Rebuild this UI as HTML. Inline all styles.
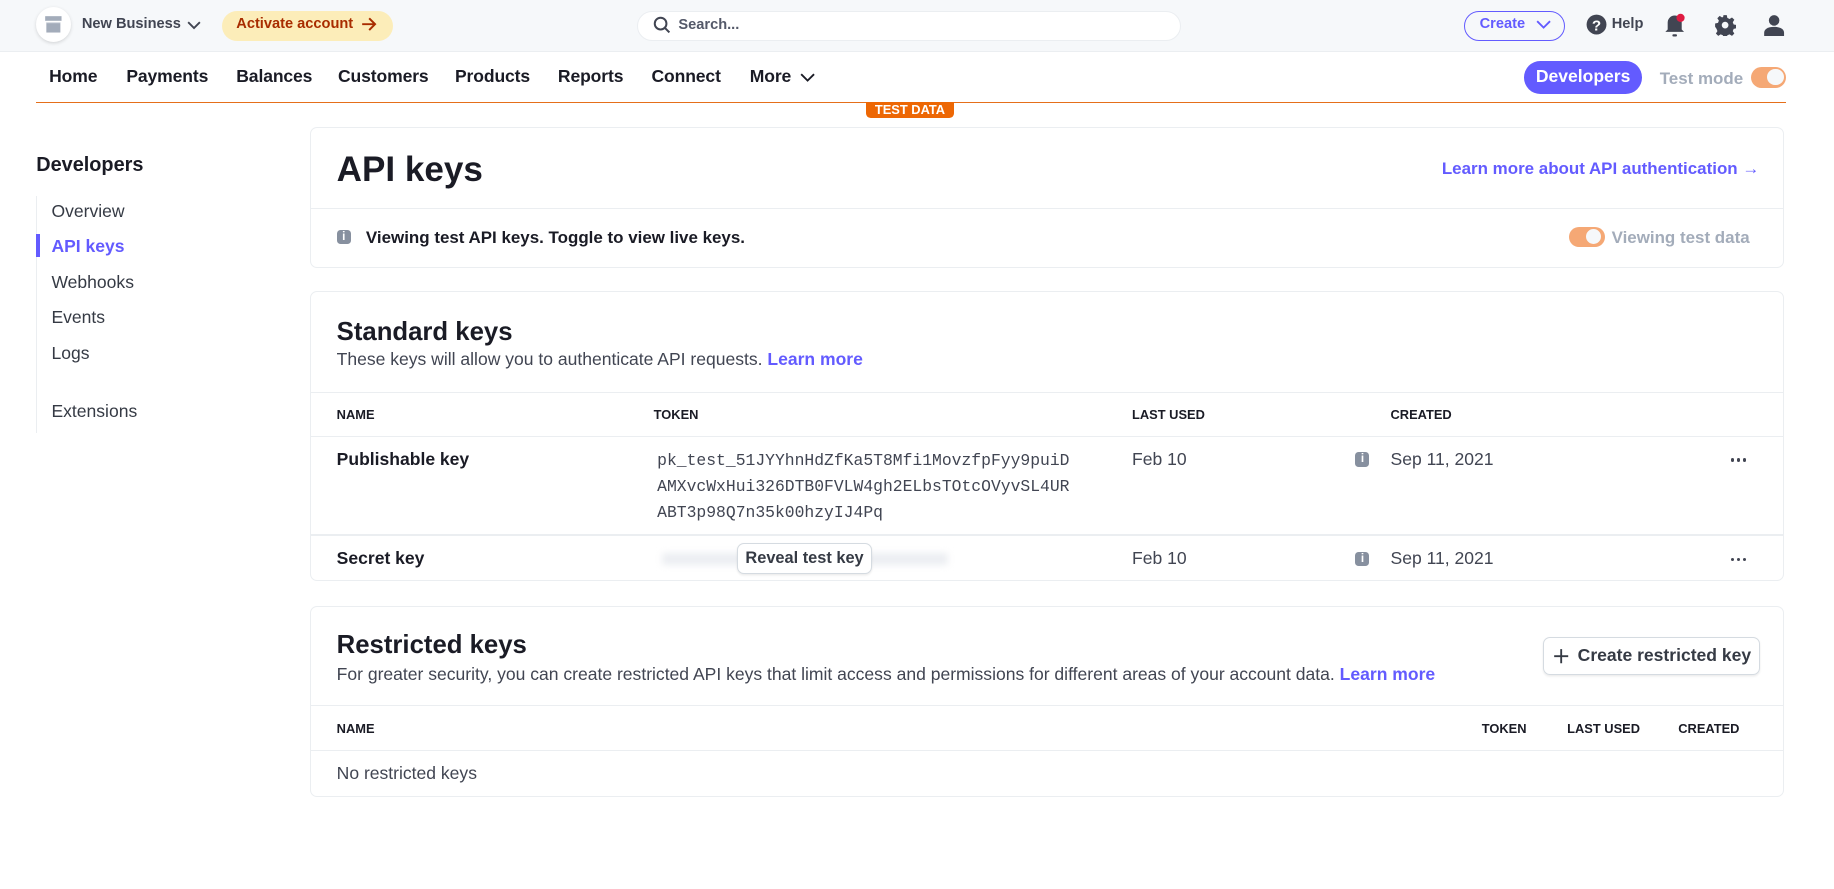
<!DOCTYPE html>
<html><head><meta charset="utf-8"><style>
html,body{margin:0;padding:0;background:#fff;overflow:hidden}
#w{position:relative;width:1568px;height:760px;zoom:1.16964;font-family:"Liberation Sans","DejaVu Sans",sans-serif;color:#1a1b25}
.a{position:absolute;white-space:nowrap}
.t{line-height:20px}
.nav{font-size:15px;font-weight:bold;color:#1a1b25;top:56px;letter-spacing:-0.1px}
.side{font-size:15px;color:#353a44;left:44px}
.card{position:absolute;left:265px;width:1260px;border:1px solid #ebeef1;border-radius:6px;box-sizing:border-box;background:#fff}
.hr{position:absolute;left:0;right:0;height:1px;background:#ebeef1}
.th{font-size:11px;font-weight:bold;color:#1a1b25}
.mono{font-family:"Liberation Mono","DejaVu Sans Mono",monospace;font-size:14px;color:#414552}
.info{position:absolute;width:12px;height:12px;border-radius:3px;background:#87909f;color:#fff;font-size:10px;font-weight:bold;text-align:center;line-height:12px}
.dots{position:absolute;width:16px;height:4px}
.dots i{position:absolute;top:0;width:3px;height:3px;border-radius:50%;background:#414552}
</style></head><body><div id="w">
<div class="a" style="left:0;top:0;width:1568px;height:44px;background:#f6f8fa;border-bottom:1px solid #ebeef1"></div>
<div class="a" style="left:31px;top:6px;width:30px;height:30px;border-radius:50%;background:#fff;box-shadow:0 1px 3px rgba(0,0,0,.15)"></div>
<svg class="a" style="left:38px;top:13px" width="16" height="16" viewBox="0 0 16 16"><rect x="1" y="1" width="14" height="4" fill="#a3acba"/><rect x="2" y="6" width="12" height="9" fill="#a3acba"/><rect x="2" y="5" width="12" height="2" fill="#fff" opacity=".6"/></svg>
<div class="a t" style="left:70px;top:11px;font-size:12.5px;font-weight:bold;color:#414552">New Business</div>
<svg class="a" style="left:160px;top:18px" width="12" height="8"><path d="M1 1l5 5 5-5" stroke="#414552" stroke-width="1.6" fill="none"/></svg>
<div class="a" style="left:190px;top:9px;width:146px;height:26px;border-radius:13px;background:#fcedb9"></div>
<div class="a t" style="left:202px;top:11px;font-size:12.5px;font-weight:bold;color:#a82c00">Activate account</div>
<svg class="a" style="left:309px;top:14px" width="14" height="14"><path d="M1 7h11M7 2l5 5-5 5" stroke="#a82c00" stroke-width="1.7" fill="none"/></svg>
<div class="a" style="left:545px;top:9px;width:465px;height:26px;border-radius:13px;background:#fff;border:1px solid #ebeef1;box-sizing:border-box"></div>
<svg class="a" style="left:558px;top:14px" width="15" height="15"><circle cx="6.5" cy="6.5" r="5" stroke="#414552" stroke-width="1.7" fill="none"/><path d="M10 10l4 4" stroke="#414552" stroke-width="1.7"/></svg>
<div class="a t" style="left:580px;top:12px;font-size:12.5px;font-weight:bold;color:#545969">Search...</div>
<div class="a" style="left:1252px;top:9px;width:86px;height:26px;border-radius:13px;border:1px solid #635bff;box-sizing:border-box"></div>
<div class="a t" style="left:1265px;top:11px;font-size:12.5px;font-weight:bold;color:#635bff">Create</div>
<svg class="a" style="left:1313px;top:17px" width="13" height="9"><path d="M1 1l5.5 5.5L12 1" stroke="#635bff" stroke-width="1.6" fill="none"/></svg>
<svg class="a" style="left:1356px;top:12px" width="18" height="18"><circle cx="9" cy="9" r="8.5" fill="#414552"/><text x="9" y="14" font-size="13" font-weight="bold" fill="#fff" text-anchor="middle" font-family="Liberation Sans">?</text></svg>
<div class="a t" style="left:1378px;top:11px;font-size:12.5px;font-weight:bold;color:#414552">Help</div>
<svg class="a" style="left:1422px;top:10px" width="20" height="22"><path d="M4 15V9a6 6 0 0 1 12 0v6l2 2H2z" fill="#414552"/><rect x="8" y="19" width="4" height="2" rx="1" fill="#414552"/><circle cx="15" cy="5" r="3.5" fill="#df1b41"/></svg>
<svg class="a" style="left:1465px;top:12px" width="19" height="19" viewBox="0 0 20 20"><path d="M8.5 1h3l.5 2.5 2 1 2.2-1.4 2.1 2.1-1.4 2.2.8 2 2.6.5v3l-2.6.5-.8 2 1.4 2.2-2.1 2.1-2.2-1.4-2 .8-.5 2.6h-3l-.5-2.6-2-.8-2.2 1.4-2.1-2.1 1.4-2.2-.8-2L1 11.5v-3l2.6-.5.8-2L3 3.8l2.1-2.1L7.3 3.1l1-.6z" fill="#414552"/><circle cx="10" cy="10" r="3" fill="#f6f8fa"/></svg>
<svg class="a" style="left:1507px;top:12px" width="19" height="19"><circle cx="9.5" cy="5.5" r="4.5" fill="#414552"/><path d="M1 19v-3c0-3 3-5 8.5-5s8.5 2 8.5 5v3z" fill="#414552"/></svg>
<div class="a nav t" style="left:42px">Home</div>
<div class="a nav t" style="left:108px">Payments</div>
<div class="a nav t" style="left:202px">Balances</div>
<div class="a nav t" style="left:289px">Customers</div>
<div class="a nav t" style="left:389px">Products</div>
<div class="a nav t" style="left:477px">Reports</div>
<div class="a nav t" style="left:557px">Connect</div>
<div class="a nav t" style="left:641px">More</div>
<svg class="a" style="left:684px;top:62px" width="13" height="9"><path d="M1 1l5.5 5.5L12 1" stroke="#1a1b25" stroke-width="1.6" fill="none"/></svg>
<div class="a" style="left:1303px;top:52px;width:101px;height:28px;border-radius:14px;background:#635bff"></div>
<div class="a t" style="left:1303px;width:101px;text-align:center;top:56px;font-size:15px;font-weight:bold;color:#fff">Developers</div>
<div class="a t" style="left:1419px;top:57px;font-size:14.5px;font-weight:bold;color:#a3acba">Test mode</div>
<div class="a" style="left:1497px;top:57px;width:30px;height:18px;border-radius:9px;background:#f5a875"></div>
<div class="a" style="left:1511px;top:59px;width:14px;height:14px;border-radius:50%;background:#f6f8fa"></div>
<div class="a" style="left:31px;top:87px;width:1496px;height:1px;background:#e56f1a"></div>
<div class="a" style="left:740px;top:87px;width:76px;height:14px;border-radius:0 0 4px 4px;background:#ed6704;color:#fff;font-size:11px;font-weight:bold;text-align:center;line-height:14px">TEST DATA</div>
<div class="a" style="left:31px;top:129px;font-size:17px;font-weight:bold;line-height:24px">Developers</div>
<div class="a" style="left:31px;top:168px;width:1px;height:202px;background:#ebeef1"></div>
<div class="a" style="left:31px;top:200px;width:3px;height:20px;background:#635bff"></div>
<div class="a side t" style="top:171px">Overview</div>
<div class="a side t" style="top:201px;color:#635bff;font-weight:bold">API keys</div>
<div class="a side t" style="top:232px">Webhooks</div>
<div class="a side t" style="top:262px">Events</div>
<div class="a side t" style="top:292px">Logs</div>
<div class="a side t" style="top:342px">Extensions</div>
<div class="card" style="top:109px;height:120px">
  <div class="a" style="left:22px;top:17px;font-size:30px;font-weight:bold;line-height:38px">API keys</div>
  <div class="a t" style="right:20px;top:24px;font-size:14.5px;font-weight:bold;color:#635bff">Learn more about API authentication →</div>
  <div class="hr" style="top:68px"></div>
  <div class="info" style="left:22px;top:87px">i</div>
  <div class="a t" style="left:47px;top:83px;font-size:14.5px;font-weight:bold;color:#1a1b25">Viewing test API keys. Toggle to view live keys.</div>
  <div class="a" style="left:1076px;top:84px;width:30px;height:17px;border-radius:9px;background:#f5a875"></div>
  <div class="a" style="left:1090px;top:86px;width:13px;height:13px;border-radius:50%;background:#f6f8fa"></div>
  <div class="a t" style="left:1112px;top:83px;font-size:14.5px;font-weight:bold;color:#a3acba">Viewing test data</div>
</div>
<div class="card" style="top:249px;height:248px">
  <div class="a" style="left:22px;top:20px;font-size:22px;font-weight:bold;line-height:28px">Standard keys</div>
  <div class="a t" style="left:22px;top:48px;font-size:15px;color:#414552">These keys will allow you to authenticate API requests. <span style="color:#635bff;font-weight:bold">Learn more</span></div>
  <div class="hr" style="top:85px"></div>
  <div class="a th t" style="left:22px;top:95px">NAME</div>
  <div class="a th t" style="left:293px;top:95px">TOKEN</div>
  <div class="a th t" style="left:702px;top:95px">LAST USED</div>
  <div class="a th t" style="left:923px;top:95px">CREATED</div>
  <div class="hr" style="top:123px"></div>
  <div class="a t" style="left:22px;top:133px;font-size:15px;font-weight:bold">Publishable key</div>
  <div class="a mono" style="left:296px;top:133px;line-height:22.5px">pk_test_51JYYhnHdZfKa5T8Mfi1MovzfpFyy9puiD<br>AMXvcWxHui326DTB0FVLW4gh2ELbsTOtcOVyvSL4UR<br>ABT3p98Q7n35k00hzyIJ4Pq</div>
  <div class="a t" style="left:702px;top:133px;font-size:15px;color:#414552">Feb 10</div>
  <div class="info" style="left:893px;top:137px">i</div>
  <div class="a t" style="left:923px;top:133px;font-size:15px;color:#414552">Sep 11, 2021</div>
  <div class="dots" style="left:1214px;top:142px"><i style="left:0"></i><i style="left:5px"></i><i style="left:10px"></i></div>
  <div class="hr" style="top:207px"></div>
  <div class="a t" style="left:22px;top:218px;font-size:15px;font-weight:bold">Secret key</div>
  <div class="a" style="left:300px;top:223px;width:245px;height:10px;background:#eceef2;filter:blur(3px)"></div>
  <div class="a" style="left:364px;top:214px;width:116px;height:27px;border-radius:6px;border:1px solid #d5dbe1;background:#fff;box-shadow:0 1px 2px rgba(0,0,0,.08);box-sizing:border-box;font-size:14px;font-weight:bold;color:#353a44;text-align:center;line-height:25px">Reveal test key</div>
  <div class="a t" style="left:702px;top:218px;font-size:15px;color:#414552">Feb 10</div>
  <div class="info" style="left:893px;top:222px">i</div>
  <div class="a t" style="left:923px;top:218px;font-size:15px;color:#414552">Sep 11, 2021</div>
  <div class="dots" style="left:1214px;top:227px"><i style="left:0"></i><i style="left:5px"></i><i style="left:10px"></i></div>
</div>
<div class="card" style="top:518px;height:163px">
  <div class="a" style="left:22px;top:19px;font-size:22px;font-weight:bold;line-height:28px">Restricted keys</div>
  <div class="a t" style="left:22px;top:48px;font-size:15px;color:#414552">For greater security, you can create restricted API keys that limit access and permissions for different areas of your account data. <span style="color:#635bff;font-weight:bold">Learn more</span></div>
  <div class="a" style="left:1053px;top:26px;width:186px;height:32px;border-radius:6px;border:1px solid #d5dbe1;box-shadow:0 1px 2px rgba(0,0,0,.08);box-sizing:border-box"></div>
  <svg class="a" style="left:1062px;top:35px" width="14" height="14"><path d="M7 1v12M1 7h12" stroke="#353a44" stroke-width="1.6"/></svg>
  <div class="a t" style="left:1083px;top:32px;font-size:15px;font-weight:bold;color:#353a44">Create restricted key</div>
  <div class="hr" style="top:84px"></div>
  <div class="a th t" style="left:22px;top:94px">NAME</div>
  <div class="a th t" style="left:1001px;top:94px">TOKEN</div>
  <div class="a th t" style="left:1074px;top:94px">LAST USED</div>
  <div class="a th t" style="left:1169px;top:94px">CREATED</div>
  <div class="hr" style="top:122px"></div>
  <div class="a t" style="left:22px;top:133px;font-size:15px;color:#414552">No restricted keys</div>
</div>
</div></body></html>
